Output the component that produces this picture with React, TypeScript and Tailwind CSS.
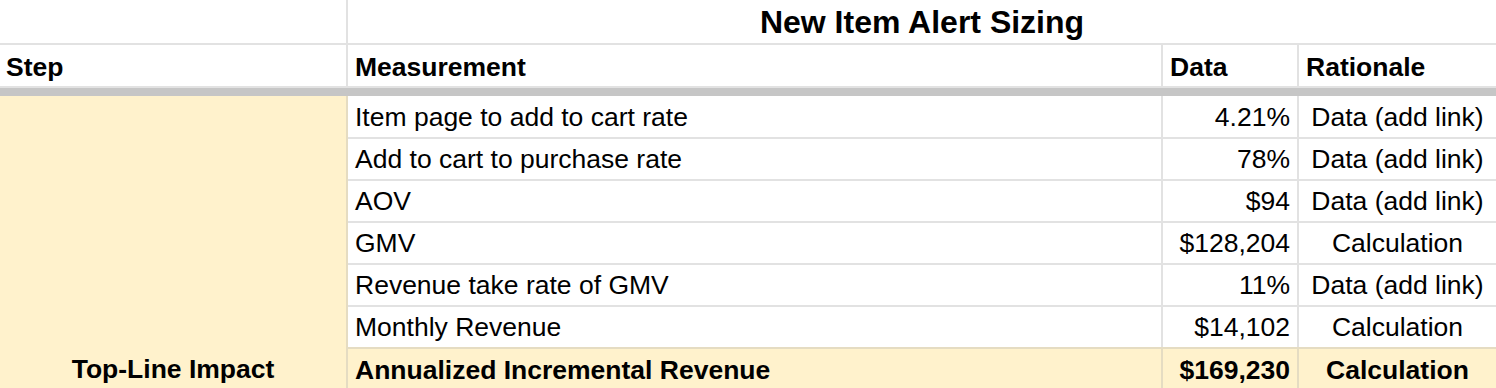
const rows = [
  ["Item page to add to cart rate", "4.21%", "Data (add link)"],
  ["Add to cart to purchase rate", "78%", "Data (add link)"],
  ["AOV", "$94", "Data (add link)"],
  ["GMV", "$128,204", "Calculation"],
  ["Revenue take rate of GMV", "11%", "Data (add link)"],
  ["Monthly Revenue", "$14,102", "Calculation"],
];

export default function App() {
  return (
    <div className="h-[388px] w-[1496px] overflow-hidden bg-white font-['Liberation_Sans',Arial,sans-serif] text-[26.5px] leading-none text-black">
      {/* title */}
      <div className="flex h-[45px] border-b-2 border-[#e2e2e2]">
        <div className="w-[348px] shrink-0 border-r-2 border-[#e2e2e2]" />
        <div className="flex flex-1 items-center justify-center pt-px text-[32px] font-bold">
          New Item Alert Sizing
        </div>
      </div>

      {/* header */}
      <div className="flex h-[41px] font-bold">
        <div className="flex w-[348px] shrink-0 items-center border-r-2 border-[#e2e2e2] pl-[6px] pt-[3px]">Step</div>
        <div className="flex w-[815px] shrink-0 items-center border-r-2 border-[#e2e2e2] pl-[7px] pt-[3px]">Measurement</div>
        <div className="flex w-[136px] shrink-0 items-center border-r-2 border-[#e2e2e2] pl-[7px] pt-[3px]">Data</div>
        <div className="flex flex-1 items-center pl-[7px] pt-[3px]">Rationale</div>
      </div>
      <div className="h-[2px] bg-[#e2e2e2]" />
      <div className="h-[8px] bg-[#c6c6c6]" />

      {/* body */}
      <div className="flex">
        <div className="flex w-[348px] shrink-0 items-end justify-center border-r-2 border-[#e5dcc2] bg-[#fff2cc] pb-[7px] font-bold">
          Top-Line Impact
        </div>
        <div className="flex flex-1 flex-col">
          {rows.map(([m, d, r], i) => (
            <div
              key={m}
              className={`flex ${i === 0 ? "h-[43px]" : "h-[42px]"} border-b-2 ${
                i === rows.length - 1 ? "border-[#e5dcc2]" : "border-[#e2e2e2]"
              }`}
            >
              <div className="flex w-[815px] shrink-0 items-center border-r-2 border-[#e2e2e2] pl-[7px] pt-px">{m}</div>
              <div className="flex w-[136px] shrink-0 items-center justify-end border-r-2 border-[#e2e2e2] pr-[7px] pt-px">{d}</div>
              <div className="flex flex-1 items-center justify-center pt-px">{r}</div>
            </div>
          ))}
          <div className="flex h-[40px] bg-[#fff2cc] font-bold">
            <div className="flex w-[815px] shrink-0 items-center border-r-2 border-[#e5dcc2] pl-[7px] pt-[2px]">
              Annualized Incremental Revenue
            </div>
            <div className="flex w-[136px] shrink-0 items-center justify-end border-r-2 border-[#e5dcc2] pr-[7px] pt-[2px]">
              $169,230
            </div>
            <div className="flex flex-1 items-center justify-center pt-[2px]">Calculation</div>
          </div>
        </div>
      </div>
    </div>
  );
}
